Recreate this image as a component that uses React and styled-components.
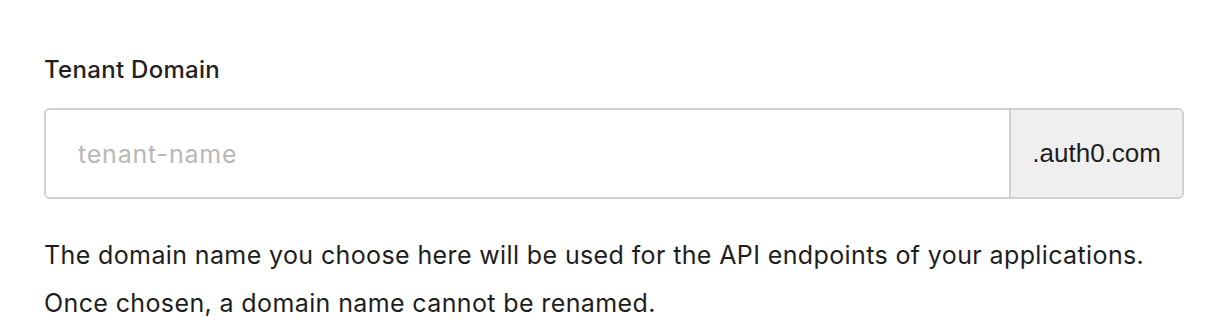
import React from "react";
import styled, { createGlobalStyle } from "styled-components";

const GlobalStyle = createGlobalStyle`
  body {
    margin: 0;
    background: #ffffff;
    font-family: "Inter", "Noto Sans", sans-serif;
    color: #1e1e1e;
  }
`;

const App = () => {
  return (
    <>
      <GlobalStyle />
      <Field>
        <Label htmlFor="tenant">Tenant Domain</Label>
        <InputGroup>
          <Input id="tenant" placeholder="tenant-name" />
          <Addon>.auth0.com</Addon>
        </InputGroup>
        <Help>
          The domain name you choose here will be used for the API endpoints of
          your applications.
          <br />
          Once chosen, a domain name cannot be renamed.
        </Help>
      </Field>
    </>
  );
};

const Field = styled.div`
  padding: 54px 42px 0 44px;
  display: flex;
  flex-direction: column;
`;

const Label = styled.label`
  font-size: 24px;
  font-weight: 500;
  line-height: 32px;
  letter-spacing: 0.3px;
  color: #222;
  margin-bottom: 22px;
`;

const InputGroup = styled.div`
  display: flex;
  height: 91px;
  border: 2px solid #d0d0d0;
  border-radius: 6px;
  overflow: hidden;
  box-sizing: border-box;
`;

const Input = styled.input`
  flex: 1;
  border: none;
  outline: none;
  padding: 0 32px;
  font-family: inherit;
  font-size: 25px;
  letter-spacing: 0.8px;
  color: #1e1e1e;
  background: #fff;
  &::placeholder {
    color: #b8b8b8;
  }
`;

const Addon = styled.div`
  display: flex;
  align-items: center;
  padding: 0 21px;
  background: #efefef;
  border-left: 2px solid #d0d0d0;
  font-family: "Liberation Sans", Arial, sans-serif;
  font-size: 26px;
  color: #1e1e1e;
`;

const Help = styled.p`
  margin: 32px 0 0;
  font-size: 25px;
  line-height: 48px;
  letter-spacing: 0.38px;
  color: #1e1e1e;
`;

export default App;
